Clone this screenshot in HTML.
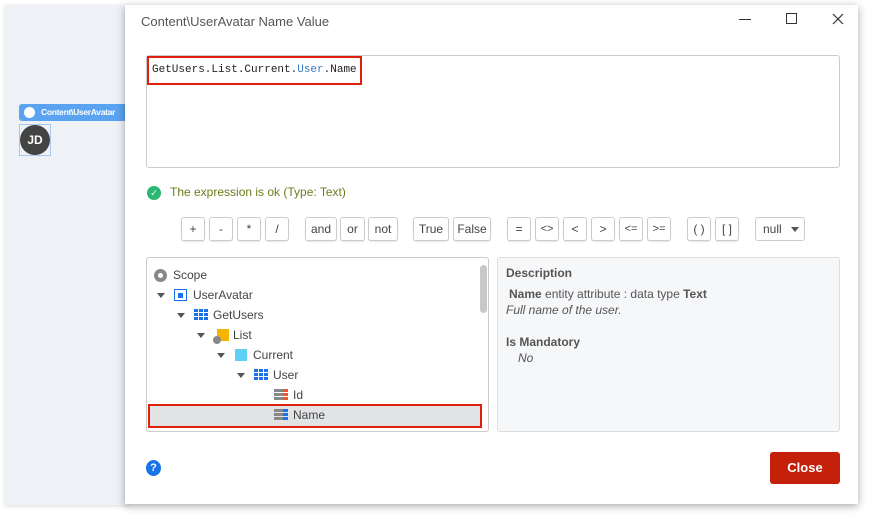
<!DOCTYPE html><html><head><style>
*{box-sizing:border-box;margin:0;padding:0}
body{width:874px;height:519px;background:#fff;font-family:"Liberation Sans",sans-serif;position:relative;overflow:hidden;color:#444}
.a{position:absolute}
.left{left:5px;top:5px;width:125px;height:500px;background:#eef2f7;box-shadow:0 1px 4px rgba(0,0,0,.15)}
.dlg{left:125px;top:5px;width:733px;height:499px;background:#fff;box-shadow:0 2px 8px rgba(0,0,0,.35)}
.b{position:absolute;top:217px;height:24px;border:1px solid #ccc;border-radius:3px;background:#fff;font-size:12px;color:#444;text-align:center;line-height:22px;box-shadow:0 1px 1px rgba(0,0,0,.1)}
.s{font-size:11px}
.row{position:absolute;font-size:12px;color:#444;height:20px;line-height:20px}
.tri{position:absolute;width:0;height:0;border-left:4px solid transparent;border-right:4px solid transparent;border-top:5px solid #555}
</style></head><body>
<div class="a left"></div>
<div class="a" style="left:19px;top:104px;width:106px;height:17px;background:#5aa3f0;border-radius:3px 0 0 3px;color:#fff;font-size:8.5px;line-height:17px;padding-left:22px;font-weight:bold;overflow:hidden;white-space:nowrap;letter-spacing:-0.3px">Content\UserAvatar</div>
<div class="a" style="left:24px;top:107px;width:11px;height:11px;border-radius:50%;background:#fff"></div>
<div class="a" style="left:19px;top:124px;width:32px;height:32px;border:1px solid #a8c8f0"></div>
<div class="a" style="left:20px;top:125px;width:30px;height:30px;border-radius:50%;background:#444;color:#fff;font-size:12px;font-weight:bold;text-align:center;line-height:30px">JD</div>
<div class="a dlg"></div>
<div class="a" style="left:141px;top:14px;font-size:13px;color:#555">Content\UserAvatar Name Value</div>
<div class="a" style="left:739px;top:19px;width:12px;height:1px;background:#333"></div>
<div class="a" style="left:786px;top:13px;width:11px;height:11px;border:1px solid #333"></div>
<svg class="a" style="left:832px;top:13px" width="12" height="12"><path d="M1 1L11 11M11 1L1 11" stroke="#333" stroke-width="1.2"/></svg>
<div class="a" style="left:146px;top:55px;width:694px;height:113px;border:1px solid #ccc;border-radius:3px"></div>
<div class="a" style="left:147px;top:56px;width:215px;height:29px;border:2px solid #e0200c"></div>
<div class="a" style="left:152px;top:64px;font-family:'Liberation Mono',monospace;font-size:11px;color:#222">GetUsers.List.Current.<span style="color:#3a7bbf">User</span>.Name</div>
<div class="a" style="left:147px;top:186px;width:14px;height:14px;border-radius:50%;background:#2bb673;color:#fff;font-size:9px;text-align:center;line-height:14px">✓</div>
<div class="a" style="left:170px;top:185px;font-size:12px;color:#6b7d1a">The expression is ok (Type: Text)</div>
<div class="b" style="left:181px;width:24px">+</div><div class="b" style="left:209px;width:24px">-</div><div class="b" style="left:237px;width:24px">*</div><div class="b" style="left:265px;width:24px">/</div>
<div class="b" style="left:305px;width:32px">and</div><div class="b" style="left:340px;width:25px">or</div><div class="b" style="left:368px;width:30px">not</div>
<div class="b" style="left:413px;width:36px">True</div><div class="b" style="left:453px;width:38px">False</div>
<div class="b" style="left:507px;width:24px">=</div><div class="b s" style="left:535px;width:24px">&lt;&gt;</div><div class="b" style="left:563px;width:24px">&lt;</div><div class="b" style="left:591px;width:24px">&gt;</div><div class="b s" style="left:619px;width:24px">&lt;=</div><div class="b s" style="left:647px;width:24px">&gt;=</div>
<div class="b" style="left:687px;width:24px">( )</div><div class="b" style="left:715px;width:24px">[ ]</div>
<div class="b" style="left:755px;width:50px;text-align:left;padding-left:7px;box-shadow:none">null</div>
<div class="tri" style="left:791px;top:227px"></div>
<div class="a" style="left:146px;top:257px;width:343px;height:175px;border:1px solid #ccc;border-radius:3px"></div>
<div class="a" style="left:480px;top:265px;width:7px;height:48px;border-radius:4px;background:#c8c8c8"></div>
<div class="a" style="left:148px;top:404px;width:334px;height:24px;background:#e2e3e5;border:2px solid #e0200c"></div>
<div class="a" style="left:154px;top:269px;width:13px;height:13px;border-radius:50%;background:#888"></div><div class="a" style="left:158px;top:273px;width:5px;height:5px;border-radius:50%;background:#fff"></div>
<div class="row" style="left:173px;top:265px">Scope</div>
<div class="tri" style="left:157px;top:293px"></div>
<div class="a" style="left:174px;top:289px;width:13px;height:12px;border:1.5px solid #1a73e8;background:#fff"></div><div class="a" style="left:178px;top:293px;width:5px;height:5px;background:#1a73e8"></div>
<div class="row" style="left:193px;top:285px">UserAvatar</div>
<div class="tri" style="left:177px;top:313px"></div>
<div class="a" style="left:194px;top:309px;width:14px;height:12px;background:repeating-linear-gradient(90deg,#1a73e8 0 4px,#fff 4px 5px),#1a73e8;-webkit-mask:repeating-linear-gradient(#000 0 3px,transparent 3px 4px)"></div>
<div class="row" style="left:213px;top:305px">GetUsers</div>
<div class="tri" style="left:197px;top:333px"></div>
<div class="a" style="left:217px;top:329px;width:12px;height:12px;background:#f5b400"></div><div class="a" style="left:213px;top:336px;width:8px;height:8px;border-radius:50%;background:#888"></div>
<div class="row" style="left:233px;top:325px">List</div>
<div class="tri" style="left:217px;top:353px"></div>
<div class="a" style="left:235px;top:349px;width:12px;height:12px;background:#5fd0f5"></div>
<div class="row" style="left:253px;top:345px">Current</div>
<div class="tri" style="left:237px;top:373px"></div>
<div class="a" style="left:254px;top:369px;width:14px;height:12px;background:repeating-linear-gradient(90deg,#1a73e8 0 4px,#fff 4px 5px);-webkit-mask:repeating-linear-gradient(#000 0 3px,transparent 3px 4px)"></div>
<div class="row" style="left:273px;top:365px">User</div>
<div class="a" style="left:274px;top:389px;width:14px;height:12px;background:linear-gradient(90deg,#888 0 9px,#e53 9px);-webkit-mask:repeating-linear-gradient(#000 0 3px,transparent 3px 4px)"></div>
<div class="row" style="left:293px;top:385px">Id</div>
<div class="a" style="left:274px;top:409px;width:14px;height:12px;background:linear-gradient(90deg,#888 0 9px,#1a73e8 9px);-webkit-mask:repeating-linear-gradient(#000 0 3px,transparent 3px 4px)"></div>
<div class="row" style="left:293px;top:405px">Name</div>
<div class="a" style="left:497px;top:257px;width:343px;height:175px;border:1px solid #ddd;border-radius:3px;background:#f6f7f9"></div>
<div class="a" style="left:506px;top:266px;font-size:12px;font-weight:bold;color:#555">Description</div>
<div class="a" style="left:509px;top:287px;font-size:12px;color:#555"><b>Name</b> entity attribute : data type <b>Text</b></div>
<div class="a" style="left:506px;top:303px;font-size:12px;color:#555;font-style:italic">Full name of the user.</div>
<div class="a" style="left:506px;top:335px;font-size:12px;font-weight:bold;color:#555">Is Mandatory</div>
<div class="a" style="left:518px;top:351px;font-size:12px;color:#555;font-style:italic">No</div>
<div class="a" style="left:146px;top:460px;width:15px;height:16px;border-radius:50%;background:#1a73e8;color:#fff;font-size:11px;font-weight:bold;text-align:center;line-height:16px">?</div>
<div class="a" style="left:770px;top:452px;width:70px;height:32px;border-radius:3px;background:#c4200a;color:#fff;font-size:13px;font-weight:bold;text-align:center;line-height:32px">Close</div>
</body></html>
